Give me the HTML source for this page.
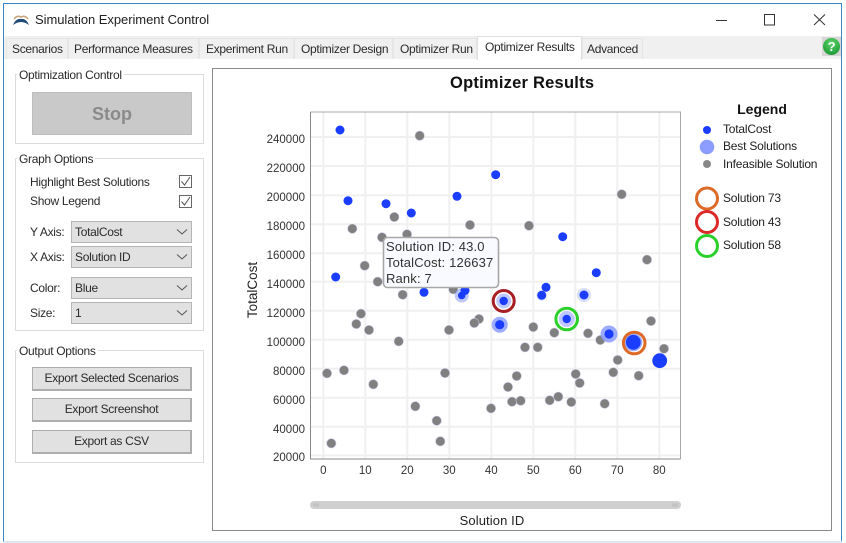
<!DOCTYPE html>
<html><head><meta charset="utf-8"><title>Simulation Experiment Control</title>
<style>
html,body{margin:0;padding:0;width:846px;height:543px;overflow:hidden;background:#fff}
body{position:relative;font-family:"Liberation Sans",Arial,sans-serif;font-size:12px;letter-spacing:-.3px;color:#2a2a2a;filter:blur(.3px)}
.a{position:absolute}
.t{position:absolute;white-space:nowrap;line-height:14px}
.win{left:3px;top:3px;width:837px;height:537px;border:1px solid #3d86c6;border-bottom-color:#c9ddf0}
.foot{left:4px;top:541px;width:838px;height:2px;background:#dbe8f4}
.strip{left:4px;top:36px;width:837px;height:23px;background:#f0f0f0}
.tab{position:absolute;top:38px;height:21px;background:#f0f0f0;border:1px solid #e6e6e6;border-bottom:0;box-sizing:border-box}
.tab.on{top:36px;height:24px;background:#fff;border-color:#e0e0e0}
.grp{position:absolute;border:1px solid #dcdcdc;box-sizing:border-box;left:15px;width:189px}
.lg{position:absolute;background:#fff;padding:0 2px;left:17px;white-space:nowrap;line-height:14px}
.btn{position:absolute;left:32px;width:160px;height:24px;box-sizing:border-box;background:#e1e1e1;border:1px solid #adadad;border-width:1px 2px 2px 1px;text-align:center;line-height:21px;color:#2a2a2a}
.cmb{position:absolute;left:71px;width:121px;height:22px;box-sizing:border-box;background:#e1e1e1;border:1px solid #b5b5b5;line-height:21px;padding-left:3px}
.cmb svg{position:absolute;right:3px;top:6px}
.cb{position:absolute;left:179px;width:13px;height:13px;box-sizing:border-box;border:1px solid #666;background:#fff}
</style></head>
<body>
<div class="a win"></div>
<div class="a foot"></div>
<svg class="a" style="left:12px;top:14px" width="18" height="13" viewBox="0 0 18 13"><path d="M2 5 Q5 1 9 3 Q13 1 16 5" fill="none" stroke="#c9a57c" stroke-width="1.6"/><path d="M1 11 Q4 4 9 5 Q14 4 17 11 Q13 8 9 8 Q5 8 1 11Z" fill="#1f4a78"/></svg>
<div class="t" style="left:35px;top:13px;font-size:13px;color:#222;letter-spacing:-.05px">Simulation Experiment Control</div>
<svg class="a" style="left:710px;top:10px" width="122" height="20"><path d="M6 10.5H17" stroke="#333" stroke-width="1"/><rect x="54.5" y="4.5" width="10" height="10.5" fill="none" stroke="#333"/><path d="M104 4.5L115 15M115 4.5L104 15" stroke="#333" stroke-width="1" fill="none"/></svg>

<div class="a strip"></div>
<div class="tab" style="left:6px;width:62px"></div>
<div class="tab" style="left:68px;width:131px"></div>
<div class="tab" style="left:199px;width:95px"></div>
<div class="tab" style="left:294px;width:99px"></div>
<div class="tab" style="left:393px;width:84px"></div>
<div class="tab on" style="left:477px;width:105px"></div>
<div class="tab" style="left:582px;width:61px"></div>
<div class="t" style="left:12px;top:42px">Scenarios</div>
<div class="t" style="left:74px;top:42px">Performance Measures</div>
<div class="t" style="left:206px;top:42px">Experiment Run</div>
<div class="t" style="left:301px;top:42px">Optimizer Design</div>
<div class="t" style="left:400px;top:42px">Optimizer Run</div>
<div class="t" style="left:485px;top:40px">Optimizer Results</div>
<div class="t" style="left:587px;top:42px">Advanced</div>
<div class="a" style="left:822px;top:37px;width:19px;height:19px;background:#d6d6d6"></div>
<div class="a" style="left:823px;top:38px;width:17px;height:17px;border-radius:50%;background:radial-gradient(circle at 50% 30%,#5fd36a,#0c8f2a);color:#fff;font-weight:bold;font-size:13px;line-height:17px;text-align:center">?</div>

<div class="grp" style="top:74px;height:70px"></div>
<div class="lg" style="top:68px">Optimization Control</div>
<div class="a" style="left:32px;top:92px;width:160px;height:43px;box-sizing:border-box;background:#c9c9c9;border:1px solid #bdbdbd;text-align:center;line-height:42px;font-weight:bold;font-size:18px;letter-spacing:0;color:#8a8a8a">Stop</div>

<div class="grp" style="top:158px;height:173px"></div>
<div class="lg" style="top:152px">Graph Options</div>
<div class="t" style="left:30px;top:175px">Highlight Best Solutions</div>
<div class="t" style="left:30px;top:194px">Show Legend</div>
<div class="cb" style="top:175px"><svg width="11" height="11" style="display:block"><path d="M1.5 5.5L4.5 9L10 1" fill="none" stroke="#555" stroke-width="1"/></svg></div>
<div class="cb" style="top:195px"><svg width="11" height="11" style="display:block"><path d="M1.5 5.5L4.5 9L10 1" fill="none" stroke="#555" stroke-width="1"/></svg></div>
<div class="t" style="left:30px;top:225px">Y Axis:</div>
<div class="t" style="left:30px;top:250px">X Axis:</div>
<div class="t" style="left:30px;top:281px">Color:</div>
<div class="t" style="left:30px;top:306px">Size:</div>
<div class="cmb" style="top:221px">TotalCost<svg width="12" height="8"><path d="M1 1.5L6 6L11 1.5" fill="none" stroke="#555"/></svg></div>
<div class="cmb" style="top:246px">Solution ID<svg width="12" height="8"><path d="M1 1.5L6 6L11 1.5" fill="none" stroke="#555"/></svg></div>
<div class="cmb" style="top:277px">Blue<svg width="12" height="8"><path d="M1 1.5L6 6L11 1.5" fill="none" stroke="#555"/></svg></div>
<div class="cmb" style="top:302px">1<svg width="12" height="8"><path d="M1 1.5L6 6L11 1.5" fill="none" stroke="#555"/></svg></div>

<div class="grp" style="top:350px;height:113px"></div>
<div class="lg" style="top:344px">Output Options</div>
<div class="btn" style="top:367px">Export Selected Scenarios</div>
<div class="btn" style="top:398px">Export Screenshot</div>
<div class="btn" style="top:430px">Export as CSV</div>

<svg class="a" style="left:0;top:0;letter-spacing:0" width="846" height="543" font-family="'Liberation Sans',Arial,sans-serif">
<rect x="212.5" y="68.5" width="619" height="462" fill="#fff" stroke="#8a8a8a"/>
<text x="522" y="88" font-size="16.5" font-weight="bold" text-anchor="middle" fill="#111" textLength="144">Optimizer Results</text>
<g stroke="#f0f0f0" stroke-width="2">
<path d="M323.3 112V459M365.3 112V459M407.3 112V459M449.3 112V459M491.3 112V459M533.3 112V459M575.3 112V459M617.3 112V459M659.3 112V459"/>
<path d="M311 137H680M311 166H680M311 195.3H680M311 224.3H680M311 253.3H680M311 281.7H680M311 310.7H680M311 339.7H680M311 368.7H680M311 397.7H680M311 426.7H680M311 455.5H680"/>
</g>
<path d="M310.5 112H680.5V459" fill="none" stroke="#a8a8a8"/>
<path d="M310.5 112V459H680.5" fill="none" stroke="#888" stroke-width="1"/>
<g font-size="11.5" fill="#333" text-anchor="end">
<text x="305" y="143">240000</text><text x="305" y="172">220000</text><text x="305" y="201">200000</text><text x="305" y="230">180000</text><text x="305" y="259">160000</text><text x="305" y="288">140000</text><text x="305" y="317">120000</text><text x="305" y="346">100000</text><text x="305" y="375">80000</text><text x="305" y="404">60000</text><text x="305" y="433">40000</text><text x="305" y="461">20000</text>
</g>
<g font-size="11.5" fill="#333" text-anchor="middle">
<text x="323.3" y="474">0</text><text x="365.3" y="474">10</text><text x="407.3" y="474">20</text><text x="449.3" y="474">30</text><text x="491.3" y="474">40</text><text x="533.3" y="474">50</text><text x="575.3" y="474">60</text><text x="617.3" y="474">70</text><text x="659.3" y="474">80</text>
</g>
<text transform="translate(257,290) rotate(-90)" font-size="13.5" text-anchor="middle" fill="#222">TotalCost</text>
<text x="492" y="525" font-size="13" text-anchor="middle" fill="#222" letter-spacing=".1">Solution ID</text>

<g fill="#808080" stroke="#c9c9e0" stroke-width=".6">
<circle cx="419.7" cy="135.7" r="4.7"/><circle cx="394.3" cy="217" r="4.7"/><circle cx="352.3" cy="228.7" r="4.7"/><circle cx="382" cy="237.3" r="4.7"/><circle cx="407" cy="234.3" r="4.7"/><circle cx="364.7" cy="265.7" r="4.7"/><circle cx="377.7" cy="281.7" r="4.7"/><circle cx="402.7" cy="294.7" r="4.7"/><circle cx="453.3" cy="289.3" r="4.7"/>
<circle cx="621.7" cy="194.3" r="4.7"/><circle cx="529" cy="225.7" r="4.7"/><circle cx="470" cy="225" r="4.7"/><circle cx="647" cy="259.7" r="4.7"/>
<circle cx="361" cy="313.7" r="4.7"/><circle cx="356.3" cy="324" r="4.7"/><circle cx="369" cy="330" r="4.7"/><circle cx="398.7" cy="341.3" r="4.7"/><circle cx="449" cy="330" r="4.7"/><circle cx="327" cy="373.3" r="4.7"/><circle cx="344" cy="370.3" r="4.7"/><circle cx="373.3" cy="384.3" r="4.7"/><circle cx="445" cy="373" r="4.7"/><circle cx="415.3" cy="406.3" r="4.7"/><circle cx="436.7" cy="420.7" r="4.7"/><circle cx="440.3" cy="441.3" r="4.7"/><circle cx="331.3" cy="443.3" r="4.7"/>
<circle cx="479" cy="319" r="4.7"/><circle cx="474.3" cy="323" r="4.7"/><circle cx="533.3" cy="327" r="4.7"/><circle cx="554.3" cy="332.7" r="4.7"/><circle cx="588" cy="333.3" r="4.7"/><circle cx="600.3" cy="340" r="4.7"/><circle cx="651" cy="321" r="4.7"/><circle cx="664" cy="348.7" r="4.7"/><circle cx="617.7" cy="360" r="4.7"/><circle cx="613.3" cy="372.3" r="4.7"/><circle cx="638.7" cy="375.7" r="4.7"/><circle cx="525" cy="347.3" r="4.7"/><circle cx="537.7" cy="347.3" r="4.7"/><circle cx="575.7" cy="374" r="4.7"/><circle cx="579.7" cy="383" r="4.7"/><circle cx="516.7" cy="376" r="4.7"/><circle cx="508" cy="387" r="4.7"/><circle cx="512" cy="401.7" r="4.7"/><circle cx="520.7" cy="400.7" r="4.7"/><circle cx="549.7" cy="400.3" r="4.7"/><circle cx="558.3" cy="396.7" r="4.7"/><circle cx="571.3" cy="402" r="4.7"/><circle cx="604.7" cy="403.7" r="4.7"/><circle cx="491" cy="408.3" r="4.7"/>
</g>
<g fill="#8c9dff" fill-opacity=".55">
<circle cx="461.7" cy="295.5" r="7"/><circle cx="541.7" cy="295.3" r="5.5" fill-opacity=".2"/><circle cx="584" cy="295" r="7" fill-opacity=".35"/>
<circle cx="503.7" cy="301" r="7.5"/><circle cx="499.7" cy="324.7" r="8" fill-opacity=".85"/><circle cx="566.7" cy="319" r="8"/><circle cx="609" cy="334" r="8.5" fill-opacity=".85"/><circle cx="633.3" cy="342.3" r="9" fill-opacity=".85"/>
</g>
<g fill="#1a3dff">
<circle cx="340" cy="130" r="4.5"/><circle cx="348" cy="200.7" r="4.5"/><circle cx="386" cy="203.7" r="4.5"/><circle cx="411.3" cy="213" r="4.5"/><circle cx="457" cy="196.3" r="4.5"/><circle cx="335.7" cy="277" r="4.5"/><circle cx="424" cy="292.3" r="4.5"/><circle cx="495.7" cy="174.7" r="4.5"/><circle cx="562.7" cy="236.7" r="4.5"/><circle cx="596.3" cy="272.7" r="4.5"/><circle cx="546" cy="287.3" r="4.5"/><circle cx="541.7" cy="295.3" r="4.5"/><circle cx="584" cy="295" r="4.5"/><circle cx="465" cy="290.5" r="4.5"/><circle cx="461.7" cy="295.5" r="3.8"/>
<circle cx="503.7" cy="301" r="4.2"/><circle cx="499.7" cy="324.7" r="4.6"/><circle cx="566.7" cy="319" r="4.2"/><circle cx="609" cy="334" r="4.6"/><circle cx="633.3" cy="342.3" r="7.4"/><circle cx="659.7" cy="360.7" r="7.4"/>
</g>
<g fill="none" stroke-width="3">
<circle cx="503.7" cy="301" r="10.5" stroke="#a81e24"/>
<circle cx="566.7" cy="319" r="10.8" stroke="#2bd12b"/>
<circle cx="634.2" cy="343" r="10.8" stroke="#dd6a27"/>
</g>
<rect x="383.5" y="237.5" width="115" height="50" rx="4" fill="#f8faff" stroke="#a8a8a8" stroke-width="1.6"/>
<g font-size="13" fill="#333" letter-spacing=".15">
<text x="386" y="251">Solution ID: 43.0</text><text x="386" y="267">TotalCost: 126637</text><text x="386" y="283">Rank: 7</text>
</g>

<rect x="310" y="501" width="371" height="8" rx="4" fill="#cfcfcf"/>
<path d="M314 503.5v3M316 503.5v3M318 503.5v3M673 503.5v3M675 503.5v3M677 503.5v3" stroke="#aaa" stroke-width=".7"/>

<text x="762" y="114" font-size="14" font-weight="bold" text-anchor="middle" fill="#111">Legend</text>
<circle cx="707" cy="130" r="4" fill="#1a3dff"/><circle cx="707" cy="147" r="7.3" fill="#8c9dff"/><circle cx="707" cy="164" r="4" fill="#888"/>
<g font-size="12" fill="#222" letter-spacing="-.2">
<text x="723" y="133">TotalCost</text><text x="723" y="150">Best Solutions</text><text x="723" y="168">Infeasible Solution</text>
<text x="723" y="202">Solution 73</text><text x="723" y="226">Solution 43</text><text x="723" y="249">Solution 58</text>
</g>
<g fill="none" stroke-width="3">
<circle cx="707" cy="198.5" r="10.5" stroke="#dd6a27"/><circle cx="707" cy="222" r="10.5" stroke="#dc2a2a"/><circle cx="707" cy="246" r="10.5" stroke="#2bd12b"/>
</g>
</svg>
</body></html>
